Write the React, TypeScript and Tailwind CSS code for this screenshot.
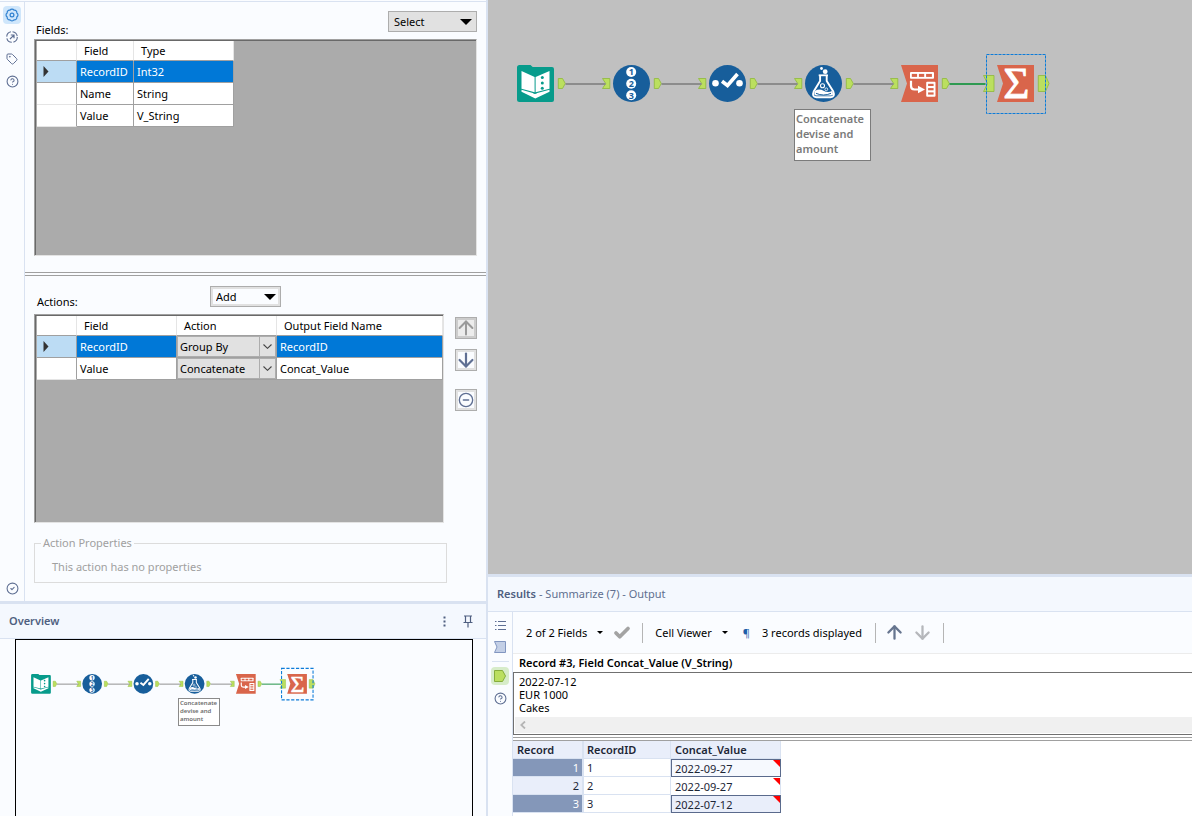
import React from "react";
import { ArrowUp, ArrowDown, CircleMinus, CircleHelp, CircleCheck, Tag, Check } from "lucide-react";

const fields = [
  { name: "RecordID", type: "Int32" },
  { name: "Name", type: "String" },
  { name: "Value", type: "V_String" },
];

const actions = [
  { field: "RecordID", action: "Group By", output: "RecordID" },
  { field: "Value", action: "Concatenate", output: "Concat_Value" },
];

const records = [
  { id: 1, value: "2022-09-27" },
  { id: 2, value: "2022-09-27" },
  { id: 3, value: "2022-07-12" },
];

// x centre of every tool on the canvas
const toolX = [20.5, 116.5, 212.5, 308.5, 404.5, 500.5];

const RowMarker = () => (
  <svg width="6" height="11" viewBox="0 0 6 11" className="ml-1.5">
    <path d="M0.5 0L5.5 5.5L0.5 11z" fill="#333" />
  </svg>
);

const OutputAnchor = ({ big = false }: { big?: boolean }) => (
  <path
    d={big ? "M22.8 -8h7.2l3.5 8l-3.5 8h-7.2z" : "M22.8 -5h4.2l2.8 5l-2.8 5h-4.2z"}
    fill="#bbdf5f"
    stroke="#8eb83b"
    strokeWidth="0.8"
  />
);

const InputAnchor = ({ big = false }: { big?: boolean }) => (
  <path
    d={big ? "M-32 -8h10.5v16h-10.5l4 -8z" : "M-29 -5h7.3v10h-7.3l3.2 -5z"}
    fill="#bbdf5f"
    stroke="#8eb83b"
    strokeWidth="0.8"
  />
);

const Workflow = ({ className, mini = false }: { className: string; mini?: boolean }) => (
  <div className={`relative ${className}`}>
    <svg viewBox="0 0 536 70" className="block w-full">
      {/* Input data */}
      <g transform="translate(20.5 33.5)">
        <path
          d="M-16 -18.5h11l2.2 2h19.3a2 2 0 0 1 2 2v31a2 2 0 0 1 -2 2h-32.5a2.5 2.5 0 0 1 -2.5 -2.5v-32a2.5 2.5 0 0 1 2.5 -2.5z"
          fill="#079b8b"
        />
        <path d="M-14 -12.5L-0.9 -6.5V8.8L-14 5.3z" fill="#fff" />
        <path d="M14 -12.5L0.1 -6.5V8.8L14 5.3z" fill="#fff" />
        <path d="M-14 6.3L-2.8 9.5Q-0.5 11.4 1.8 9.5L14 6.3V8.2L-0.2 15L-14 8.2z" fill="#fff" />
        <g fill="#079b8b">
          <circle cx="6.8" cy="-6" r="1.5" />
          <circle cx="6.8" cy="-0.5" r="1.5" />
          <circle cx="6.8" cy="4.8" r="1.5" />
        </g>
        <OutputAnchor />
      </g>

      {/* Record ID */}
      <g transform="translate(116.5 33.5)">
        <InputAnchor />
        <circle r="18.5" fill="#175e9b" />
        {[-11.5, 0.2, 11.7].map((y, i) => (
          <g key={y}>
            <circle cx="-0.3" cy={y} r="5" fill="#fff" />
            <text
              x="-0.3"
              y={y + 3.3}
              textAnchor="middle"
              fontSize="9"
              fontWeight="700"
              fill="#175e9b"
            >
              {i + 1}
            </text>
          </g>
        ))}
        <OutputAnchor />
      </g>

      {/* Select */}
      <g transform="translate(212.5 33.5)">
        <InputAnchor />
        <circle r="18.5" fill="#175e9b" />
        <circle cx="-12" cy="-0.3" r="3.3" fill="#fff" />
        <circle cx="12" cy="-0.3" r="3.3" fill="#fff" />
        <path d="M-5.5 -2.2L0 2L10 -9.5" fill="none" stroke="#fff" strokeWidth="3.6" />
        <OutputAnchor />
      </g>

      {/* Formula */}
      <g transform="translate(308.5 33.5)">
        <InputAnchor />
        <circle r="18.5" fill="#175e9b" />
        <circle cx="-2" cy="-15" r="1.4" fill="#fff" />
        <circle cx="1.7" cy="-11.8" r="2.4" fill="#fff" />
        <path d="M-4.8 -8.2H4.4" stroke="#fff" strokeWidth="1.8" />
        <path
          d="M-3.4 -8.5V-2.5L-9.8 8Q-12 13.5 -7 13.8H7Q12 13.5 9.8 8L3.2 -2.5V-8.5"
          fill="none"
          stroke="#fff"
          strokeWidth="1.9"
        />
        <path d="M-8.5 7.5Q-4.5 4.8 0 7.2T8.5 7.5Q11 12 7.5 12H-7Q-10.5 12 -8.5 7.5z" fill="#fff" />
        <path d="M-7.5 9.8Q0 13.2 7.5 9.8" fill="none" stroke="#175e9b" strokeWidth="1" />
        <circle cx="-1" cy="2.2" r="2" fill="none" stroke="#fff" strokeWidth="1.1" />
        <circle cx="2.8" cy="5.8" r="1.4" fill="#175e9b" stroke="#fff" strokeWidth="0.8" />
        <OutputAnchor />
      </g>

      {/* Transpose */}
      <g transform="translate(404.5 33.5)">
        <InputAnchor />
        <path d="M-18.5 -18.5H18.5V18.5H-18.5L-12.5 0z" fill="#d9654b" />
        <rect x="-9.5" y="-11.5" width="24" height="6.8" rx="1" fill="#fff" />
        <g fill="#d9654b">
          <rect x="-7.7" y="-9.6" width="5.3" height="3" />
          <rect x="-0.6" y="-9.6" width="5.3" height="3" />
          <rect x="6.6" y="-9.6" width="5.8" height="3" />
        </g>
        <path d="M-8.5 -2.7V2.5Q-8.5 6 -5 6H-1" fill="none" stroke="#fff" strokeWidth="2.2" />
        <path d="M-1.5 2.2L5.5 6L-1.5 9.8z" fill="#fff" />
        <rect x="6.7" y="-1.8" width="9.3" height="15" rx="1" fill="#fff" />
        <g fill="#d9654b">
          <rect x="8.6" y="0.3" width="5.5" height="2.2" />
          <rect x="8.6" y="4.6" width="5.5" height="2.2" />
          <rect x="8.6" y="8.9" width="5.5" height="2.2" />
        </g>
        <OutputAnchor />
      </g>

      {/* Summarize */}
      <g transform="translate(500.5 33.5)">
        <InputAnchor big />
        <path d="M-18.5 -18.5H18.5V18.5H-18.5L-12.5 0z" fill="#d9654b" />
        <text
          x="0.8"
          y="14.8"
          textAnchor="middle"
          fontSize="45"
          fontFamily="Liberation Serif, serif"
          fill="#fff"
          stroke="#fff"
          strokeWidth="0.8"
        >
          Σ
        </text>
        <OutputAnchor big />
        <rect
          x="-29"
          y="-29"
          width="59"
          height="59"
          fill="none"
          stroke="#0c7bd8"
          strokeWidth={mini ? 2 : 1}
          strokeDasharray={mini ? "6 3" : "3 1"}
        />
      </g>

      {/* Connections */}
      {toolX.slice(0, 5).map((x, i) => (
        <line
          key={x}
          x1={x + 30}
          x2={i === 4 ? x + 66 : x + 70}
          y1="34"
          y2="34"
          stroke={i === 4 ? "#2f9a52" : "#8c8c8c"}
          strokeWidth={i === 4 ? 2 : 1.8}
        />
      ))}
    </svg>
    <p
      className={
        mini
          ? "absolute left-[148px] top-8 w-[42px] h-7 border border-[#8a8a8a] bg-white text-[#6b6b6b] font-semibold text-[6px] leading-[8px] px-px"
          : "absolute left-[279px] top-[59px] w-[77px] h-[52px] border border-[#7b7b7b] bg-white text-[#7a7a7a] font-semibold text-[11px] leading-[15px] px-px pt-px"
      }
    >
      Concatenate devise and amount
    </p>
  </div>
);

const CaretSelect = ({ label, className }: { label: string; className: string }) => (
  <div className="relative self-start">
    <select
      aria-label={label}
      className={`block appearance-none h-[21px] pl-[5px] leading-4 border border-[#adadad] ${className}`}
    >
      <option>{label}</option>
    </select>
    <svg
      width="12"
      height="6"
      viewBox="0 0 12 6"
      className="absolute right-[5px] top-2 pointer-events-none"
    >
      <path d="M0 0H12L6 6z" fill="#000" />
    </svg>
  </div>
);

const SideButton = ({ label, dim, children }: { label: string; dim?: boolean; children: React.ReactNode }) => (
  <button
    aria-label={label}
    className={`flex items-center justify-center w-[22px] h-[22px] border border-[#adadad] ${
      dim ? "bg-[#cccccc] text-[#9a9a9a]" : "bg-[#e1e1e1] text-[#5f6f93]"
    }`}
  >
    <span className={`flex items-center justify-center size-4 ${dim ? "bg-[#ececec]" : "bg-[#fafcff]"}`}>
      {children}
    </span>
  </button>
);

const GearIcon = () => (
  <svg width="14" height="14" viewBox="0 0 14 14" fill="none" stroke="#2f80d0" strokeWidth="1.2">
    <path
      d="M5 2.2A2.3 2.3 0 0 1 9 2.2A2.3 2.3 0 0 1 11.8 5A2.3 2.3 0 0 1 11.8 9A2.3 2.3 0 0 1 9 11.8A2.3 2.3 0 0 1 5 11.8A2.3 2.3 0 0 1 2.2 9A2.3 2.3 0 0 1 2.2 5A2.3 2.3 0 0 1 5 2.2z"
      strokeLinejoin="round"
    />
    <circle cx="7" cy="7" r="1.9" />
  </svg>
);

const PinIcon = () => (
  <svg width="10" height="13" viewBox="0 0 10 13" fill="none" stroke="currentColor" strokeWidth="1.2">
    <path d="M1 1H9M2.5 1V7M7.5 1V7M0.5 7.5H9.5M5 7.5V12.5" />
  </svg>
);

const cell = "border-r border-b border-[#a0a0a0] p-0";
const header = "border-r border-r-[#e5e5e5] border-b border-b-[#a0a0a0] p-0 pl-[7px] text-left font-normal";
const rowHead = "border-r border-r-[#a0a0a0] border-b border-b-[#e5e5e5] p-0 bg-white";

const FieldsTable = () => (
  <table className="table-fixed w-[197px] border-separate border-spacing-0 bg-white">
    <colgroup>
      <col className="w-10" />
      <col className="w-[57px]" />
      <col className="w-[100px]" />
    </colgroup>
    <thead>
      <tr className="h-5">
        <th className={`${header} border-r-[#a0a0a0]`}></th>
        <th className={header}>Field</th>
        <th className={header}>Type</th>
      </tr>
    </thead>
    <tbody>
      {fields.map((f, i) => (
        <tr key={f.name} className={i === 0 ? "h-[22px] bg-[#0078d7] text-white" : "h-[22px]"}>
          <td className={i === 0 ? "border-r border-b border-[#a0a0a0] p-0 bg-[#bcdcf4]" : rowHead}>
            {i === 0 && <RowMarker />}
          </td>
          <td className={`${cell} pl-[3px]`}>{f.name}</td>
          <td className={`${cell} pl-[3px]`}>{f.type}</td>
        </tr>
      ))}
    </tbody>
  </table>
);

const ActionsTable = () => (
  <table className="table-fixed w-full border-separate border-spacing-0 bg-white">
    <colgroup>
      <col className="w-10" />
      <col className="w-[100px]" />
      <col className="w-[100px]" />
      <col />
    </colgroup>
    <thead>
      <tr className="h-5">
        <th className={`${header} border-r-[#a0a0a0]`}></th>
        <th className={header}>Field</th>
        <th className={header}>Action</th>
        <th className={header}>Output Field Name</th>
      </tr>
    </thead>
    <tbody>
      {actions.map((a, i) => (
        <tr key={a.field} className={i === 0 ? "h-[22px] bg-[#0078d7] text-white" : "h-[22px]"}>
          <td className={i === 0 ? "border-r border-b border-[#a0a0a0] p-0 bg-[#bcdcf4]" : rowHead}>
            {i === 0 && <RowMarker />}
          </td>
          <td className={`${cell} pl-[3px]`}>{a.field}</td>
          <td className={cell}>
            <div className="relative">
              <select
                aria-label={`Action for ${a.field}`}
                className="block appearance-none w-full h-[21px] pl-0.5 bg-[#e1e1e1] border border-[#adadad] text-black"
              >
                <option>{a.action}</option>
              </select>
              <span className="absolute right-0 top-0 flex items-center justify-center w-[17px] h-[21px] border border-[#adadad] pointer-events-none">
                <svg width="9" height="5" viewBox="0 0 9 5" fill="none" stroke="#444" strokeWidth="1.1">
                  <path d="M0.5 0.5L4.5 4.3L8.5 0.5" />
                </svg>
              </span>
            </div>
          </td>
          <td className={`${cell} pl-[3px]`}>{a.output}</td>
        </tr>
      ))}
    </tbody>
  </table>
);

const ConfigPanel = () => (
  <section className="flex flex-1 min-h-0 mt-px border-t border-[#d9e2f1]">
    <nav className="flex flex-col items-center gap-1 w-[25px] shrink-0 pt-1 pb-1 border-r border-[#d9e2f1] text-[#5f6f93]">
      <button aria-label="Configuration" className="flex items-center justify-center size-[18px] rounded-sm bg-[#cfe6fb]">
        <GearIcon />
      </button>
      <button aria-label="Navigation" className="flex items-center justify-center size-[18px]">
        <svg width="12" height="12" viewBox="0 0 12 12" fill="none" stroke="currentColor">
          <circle cx="6" cy="6" r="5.3" strokeDasharray="6.6 1.7" strokeWidth="1.1" />
          <path d="M4 8L7.7 4.3M4.8 4H8V7.2" strokeWidth="1.2" />
        </svg>
      </button>
      <button aria-label="Annotation" className="flex items-center justify-center size-[18px]">
        <Tag size={12} />
      </button>
      <button aria-label="Help" className="flex items-center justify-center size-[18px]">
        <CircleHelp size={13} />
      </button>
      <button aria-label="Apply" className="flex items-center justify-center size-[18px] mt-auto">
        <CircleCheck size={13} />
      </button>
    </nav>

    <div className="flex flex-col flex-1 min-w-0">
      <div className="flex items-end justify-between h-[37px] pt-[9px] pl-[11px] pr-[9px]">
        <h2 className="leading-4 pb-px">Fields:</h2>
        <CaretSelect label="Select" className="w-[89px] bg-[#e1e1e1]" />
      </div>
      <div className="mx-[9px] h-[217px] bg-[#ababab] border border-[#a0a0a0] border-b-[#e3e3e3] border-r-[#e3e3e3]">
        <div className="h-full border-t border-l border-[#696969] pl-px">
          <FieldsTable />
        </div>
      </div>

      <div className="mt-4 h-1 shrink-0 border-y border-[#a0a0a0]" />

      <div className="flex items-end h-[38px] pt-[10px] pl-3">
        <h2 className="w-[173px] leading-4 pb-1">Actions:</h2>
        <CaretSelect label="Add" className="w-[71px] bg-[#fafcff] ring-2 ring-inset ring-[#e1e1e1]" />
      </div>
      <div className="flex gap-[11px] mx-[9px]">
        <div className="flex-1 h-[209px] bg-[#ababab] border border-[#a0a0a0] border-b-[#e3e3e3] border-r-[#e3e3e3]">
          <div className="h-full border-t border-l border-[#696969] pl-px">
            <ActionsTable />
          </div>
        </div>
        <div className="flex flex-col gap-2.5 pt-[3px]">
          <SideButton label="Move up" dim>
            <ArrowUp size={22} strokeWidth={2.2} className="shrink-0" />
          </SideButton>
          <SideButton label="Move down">
            <ArrowDown size={22} strokeWidth={2.4} className="shrink-0" />
          </SideButton>
          <div className="mt-2">
            <SideButton label="Remove">
              <CircleMinus size={16} strokeWidth={2} className="shrink-0" />
            </SideButton>
          </div>
        </div>
      </div>

      <fieldset className="mt-3 ml-[9px] mr-[39px] h-12 border border-[#dcdcdc] text-[#a0a0a0]">
        <legend className="ml-1.5 px-0.5 leading-4">Action Properties</legend>
        <p className="pl-[17px] pt-2 leading-4">This action has no properties</p>
      </fieldset>
    </div>
  </section>
);

const OverviewPanel = () => (
  <section className="flex flex-col h-[215px] shrink-0 border-t-[3px] border-[#d9e2f1]">
    <header className="flex items-center h-[35px] shrink-0 pl-[9px] pr-[13px] bg-[#f4f8fe] text-[#4f5f80] border-b border-[#d9e2f1]">
      <h2 className="font-semibold">Overview</h2>
      <button aria-label="More" className="ml-auto mr-[17px]">
        <svg width="3" height="11" viewBox="0 0 3 11" fill="currentColor">
          <path d="M0.5 0.5h2v2h-2zM0.5 4.5h2v2h-2zM0.5 8.5h2v2h-2z" />
        </svg>
      </button>
      <button aria-label="Pin">
        <PinIcon />
      </button>
    </header>
    <div className="flex-1 ml-[15px] mr-[13px] border border-b-0 border-black overflow-hidden">
      <Workflow mini className="ml-3.5 mt-[26px] w-[286px]" />
    </div>
  </section>
);

const ResultsToolbar = () => (
  <div className="flex items-center h-[42px] shrink-0 pl-[13px] bg-[#fafcff] border-b border-[#ececec]">
    <button className="flex items-center gap-2.5">
      2 of 2 Fields
      <svg width="6" height="3" viewBox="0 0 6 3">
        <path d="M0 0H6L3 3z" />
      </svg>
    </button>
    <button aria-label="Apply" className="ml-2.5 text-[#a3a3a3]">
      <Check size={18} strokeWidth={5} />
    </button>
    <span className="ml-[11px] w-px h-5 bg-[#b5b5b5]" />
    <button className="flex items-center gap-2.5 ml-3">
      Cell Viewer
      <svg width="6" height="3" viewBox="0 0 6 3">
        <path d="M0 0H6L3 3z" />
      </svg>
    </button>
    <button aria-label="Show whitespace" className="ml-[15px] text-[#1c5fa8]">
      ¶
    </button>
    <p className="ml-3">3 records displayed</p>
    <span className="ml-[13px] w-px h-5 bg-[#b5b5b5]" />
    <button aria-label="Previous record" className="ml-2 text-[#66758f]">
      <ArrowUp size={21} strokeWidth={2.6} />
    </button>
    <button aria-label="Next record" className="ml-[7px] text-[#b5b7bb]">
      <ArrowDown size={21} strokeWidth={2.6} />
    </button>
    <span className="ml-2.5 w-px h-5 bg-[#b5b5b5]" />
  </div>
);

const ResultsTable = () => (
  <table className="table-fixed w-[268px] border-separate border-spacing-0 text-[#1d2636]">
    <colgroup>
      <col className="w-[71px]" />
      <col className="w-[87px]" />
      <col className="w-[110px]" />
    </colgroup>
    <thead>
      <tr className="h-[18px] bg-[#e9eefa] text-left">
        <th className="p-0 pl-1 font-semibold border-r-2 border-b border-[#d9e2f1]">Record</th>
        <th className="p-0 pl-[3px] font-semibold border-r border-b border-[#d9e2f1]">RecordID</th>
        <th className="p-0 pl-1 font-semibold border-r border-b border-[#d9e2f1]">Concat_Value</th>
      </tr>
    </thead>
    <tbody>
      {records.map((r) => (
        <tr key={r.id} className="h-[18px]">
          <td
            className={`p-0 pr-[3px] text-right border-r-2 border-b border-[#d9e2f1] ${
              r.id === 2 ? "bg-[#e9eefa]" : "bg-[#8497b9] text-white"
            }`}
          >
            {r.id}
          </td>
          <td className="p-0 pt-px pl-[3px] border-r border-b border-[#d9e2f1]">{r.id}</td>
          <td
            className={`relative p-0 pt-px pl-[3px] leading-[15px] border ${
              r.id === 2
                ? "border-transparent border-r-[#d9e2f1]"
                : r.id === 1
                  ? "border-[#5a6a8c] bg-[#f6f9fe]"
                  : "border-[#5a6a8c] bg-[#e9eefa]"
            }`}
          >
            {r.value}
            <svg width="7" height="7" viewBox="0 0 7 7" className="absolute right-0 top-0">
              <path d="M0 0H7V7z" fill="#f00" />
            </svg>
          </td>
        </tr>
      ))}
    </tbody>
  </table>
);

const ResultsPanel = () => (
  <section className="flex flex-col h-[242px] shrink-0 border-t-[3px] border-[#d9e2f1] bg-white">
    <header className="flex items-center gap-[3px] h-[35px] shrink-0 pl-[9px] bg-[#f4f8fe] border-b border-[#d9e2f1] text-[#5f6f8f]">
      <h2 className="font-semibold text-[#4f5f80]">Results</h2>
      <p>- Summarize (7) - Output</p>
    </header>
    <div className="flex flex-1 min-h-0">
      <nav className="flex flex-col items-center w-[25px] shrink-0 pt-1 bg-[#fafcff] border-r border-[#d9e2f1] text-[#5f6f93]">
        <button aria-label="Messages" className="flex items-center justify-center size-[18px]">
          <svg width="11" height="9" viewBox="0 0 11 9" stroke="currentColor">
            <path d="M0 0.5H1.5M0 4.5H1.5M0 8.5H1.5M3 0.5H11M3 4.5H11M3 8.5H11" />
          </svg>
        </button>
        <button aria-label="Input anchor" className="flex items-center justify-center size-[18px] mt-1">
          <svg width="12" height="12" viewBox="0 0 12 12">
            <path d="M0.5 0.5H11.5V11.5H0.5L3 6z" fill="#c3cfe6" stroke="#8296c0" />
          </svg>
        </button>
        <span className="w-[17px] h-px mt-[5px] bg-[#d9e2f1]" />
        <button aria-label="Output anchor" className="flex items-center justify-center size-[18px] mt-[5px] rounded-sm bg-[#d7ecc9]">
          <svg width="12" height="12" viewBox="0 0 12 12">
            <path d="M0.5 0.5H8.5L11.5 6L8.5 11.5H0.5z" fill="#bbdf5f" stroke="#86ad3c" />
          </svg>
        </button>
        <button aria-label="Help" className="flex items-center justify-center size-[18px] mt-1">
          <CircleHelp size={13} />
        </button>
      </nav>

      <div className="flex flex-col flex-1 min-w-0">
        <ResultsToolbar />
        <h3 className="h-[18px] shrink-0 pl-1.5 font-semibold leading-[18px]">
          Record #3, Field Concat_Value (V_String)
        </h3>
        <div className="h-[63px] shrink-0 border border-r-0 border-[#707070]">
          <div className="h-11 pl-[5px] pt-0.5 leading-[13px]">
            <p>2022-07-12</p>
            <p>EUR 1000</p>
            <p>Cakes</p>
          </div>
          <div className="flex items-center h-4 ml-px pl-[5px] bg-[#f0f0f0]">
            <svg width="6" height="8" viewBox="0 0 6 8" fill="none" stroke="#b5b5b5" strokeWidth="1.8">
              <path d="M5 0.5L1.2 4L5 7.5" />
            </svg>
          </div>
        </div>
        <div className="mt-0.5 h-1 shrink-0 border-y border-[#a0a0a0]" />
        <ResultsTable />
      </div>
    </div>
  </section>
);

export default function App() {
  return (
    <div className="flex h-screen overflow-hidden bg-[#fafcff] font-['Noto_Sans',sans-serif] text-[11px] leading-4 text-black">
      <div className="flex flex-col w-[488px] shrink-0 border-r-2 border-[#d9e2f1]">
        <ConfigPanel />
        <OverviewPanel />
      </div>
      <main className="flex flex-col flex-1 min-w-0">
        <div className="flex-1 min-h-0 pt-[50px] pl-[27px] bg-[#c0c0c0]">
          <Workflow className="w-[536px]" />
        </div>
        <ResultsPanel />
      </main>
    </div>
  );
}
